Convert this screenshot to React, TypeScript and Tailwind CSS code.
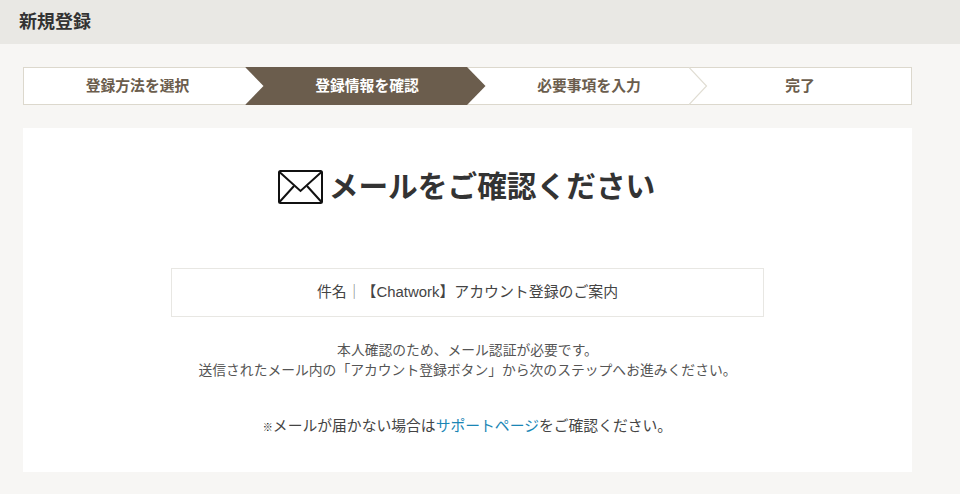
const font = { fontFamily: '"Helvetica Neue", "Liberation Sans", "Noto Sans CJK JP", sans-serif' };

function Chevron({ active }: { active?: boolean }) {
  return (
    <svg className={`absolute left-full z-10 h-[38px] w-[19px] ${active ? 'top-0' : 'top-[-1px]'}`} viewBox="0 0 19 38">
      {active ? (
        <polygon points="0,0 18.5,19 0,38" fill="#6b5d4d" />
      ) : (
        <polyline points="0,0.5 17.5,19 0,37.5" fill="#fff" stroke="#e0ddd3" strokeWidth="1.2" />
      )}
    </svg>
  );
}

function Notch() {
  return (
    <svg className="absolute top-0 left-0 h-[38px] w-[19px]" viewBox="0 0 19 38">
      <polygon points="0,0 18.5,19 0,38" fill="#fff" />
    </svg>
  );
}

export default function App() {
  return (
    <div className="h-[494px] w-[960px] overflow-hidden bg-[#f7f6f4]" style={font}>
      <header className="flex h-11 items-center bg-[#e9e8e4] pl-[19px]">
        <h1 className="text-lg leading-none font-bold text-[#333]">新規登録</h1>
      </header>

      <main className="ml-[23px] w-[889px] pt-[23px]">
        <ol className="grid h-[38px] grid-cols-[221px_222px_222px_1fr] border border-[#dcd8cd] bg-white text-[14.8px] font-bold text-[#6b5d4d]">
          <li className="flex items-center justify-center pl-[6px]">登録方法を選択</li>
          <li className="relative -my-px flex items-center justify-center bg-[#6b5d4d] pl-[22px] text-white">
            <Notch />
            <span className="relative">登録情報を確認</span>
            <Chevron active />
          </li>
          <li className="relative flex items-center justify-center pl-[22px]">
            必要事項を入力
            <Chevron />
          </li>
          <li className="flex items-center justify-center">完了</li>
        </ol>

        <section className="mt-[23px] flex h-[344px] flex-col items-center bg-white">
          <h2 className="mt-[39px] flex items-center gap-[6px] pr-[2px] text-[29.7px] leading-10 font-bold text-[#333]">
            <svg className="h-[34px] w-[45px]" viewBox="0 0 45 34" fill="none" stroke="#111" strokeWidth="2">
              <rect x="1" y="1" width="43" height="32" rx="1.5" />
              <path d="M1.5 2 L22.5 21 L43.5 2" />
              <path d="M1.5 32 L16 16 M43.5 32 L29 16" />
            </svg>
            メールをご確認ください
          </h2>

          <p className="mt-[61px] flex h-[49px] w-[593px] items-center justify-center border border-[#e8e7e3] text-[14.9px] text-[#444]">
            件名<span className="opacity-70">｜</span>【Chatwork】アカウント登録のご案内
          </p>

          <p className="mt-[24px] text-center text-[13.8px] leading-5 text-[#555]">
            本人確認のため、メール認証が必要です。
            <br />
            送信されたメール内の「アカウント登録ボタン」から次のステップへお進みください。
          </p>

          <p className="mt-[33px] text-[14.8px] leading-6 text-[#444]">
            <span className="text-[10px] font-bold text-[#111]">※</span>メールが届かない場合は<a className="text-[#1a86b5]">サポートページ</a>をご確認ください。
          </p>
        </section>
      </main>
    </div>
  );
}
